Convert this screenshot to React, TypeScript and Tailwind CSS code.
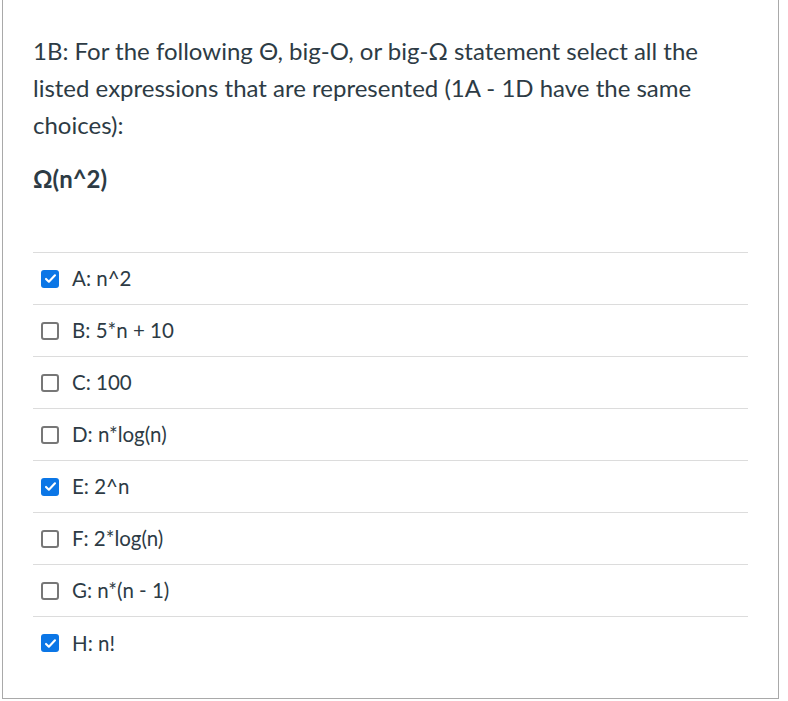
import React from 'react';

const answers = [
  { label: 'A: n^2', checked: true },
  { label: 'B: 5*n + 10', checked: false },
  { label: 'C: 100', checked: false },
  { label: 'D: n*log(n)', checked: false },
  { label: 'E: 2^n', checked: true },
  { label: 'F: 2*log(n)', checked: false },
  { label: 'G: n*(n - 1)', checked: false },
  { label: 'H: n!', checked: true },
];

function Box({ checked }: { checked: boolean }) {
  if (checked) {
    return (
      <span className="flex h-[18px] w-[18px] items-center justify-center rounded-[3px] bg-[#0b76e6]">
        <svg width="13" height="13" viewBox="0 0 16 16" fill="none">
          <path d="M2.5 8.5l3.5 3.5 7.5-8" stroke="white" strokeWidth="2.6" strokeLinecap="round" strokeLinejoin="round" />
        </svg>
      </span>
    );
  }
  return <span className="block h-[18px] w-[18px] rounded-[3px] border-2 border-[#777]" />;
}

export default function App() {
  return (
    <div className="h-[701px] w-[788px] bg-white font-['Lato','Noto_Sans',sans-serif] text-[#2d3b45]">
      <div className="ml-[2px] h-[699px] w-[777px] border-x border-b border-[#a9a9a9] px-[30px] pt-[32px]">
        <p className="text-[24px] leading-[37px]">
          1B: For the following Θ, big-O, or big-Ω statement select all the listed expressions that are represented (1A - 1D have the same choices):
        </p>
        <p className="mt-[17px] text-[24px] font-bold leading-[37px]">Ω(n^2)</p>
        <div className="mt-[55px] border-t border-[#dcdcdc]">
          {answers.map((a, i) => (
            <div
              key={a.label}
              className={`flex h-[52px] items-center gap-[13px] pl-[8px] ${i < answers.length - 1 ? 'border-b border-[#dcdcdc]' : ''}`}
            >
              <Box checked={a.checked} />
              <span className="text-[20.5px]">{a.label}</span>
            </div>
          ))}
        </div>
      </div>
    </div>
  );
}
